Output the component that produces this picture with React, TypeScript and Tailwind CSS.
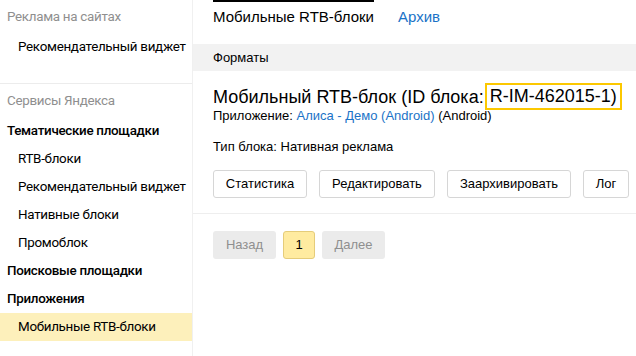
import React from "react";

const side = { fontFamily: 'Roboto, "Noto Sans", sans-serif' };
const main = { fontFamily: '"Liberation Sans", Arial, sans-serif' };

function SideItem({ children, kind }: { children: React.ReactNode; kind: "head" | "group" | "item" | "active" }) {
  const base = "h-[28px] flex items-center whitespace-nowrap text-[13.4px] tracking-[-0.3px] ";
  if (kind === "head") return <div className={base + "pl-[7px] text-[#8f8f8f]"}>{children}</div>;
  if (kind === "group") return <div className={base + "pl-[7px] font-medium text-black"}>{children}</div>;
  if (kind === "active") return <div className={base + "pl-[18px] text-black bg-[#fdf0bb]"}>{children}</div>;
  return <div className={base + "pl-[18px] text-black"}>{children}</div>;
}

export default function App() {
  return (
    <div className="w-[636px] h-[356px] overflow-hidden bg-white flex">
      <aside className="w-[193px] shrink-0 border-r border-[#f0f0f0] pt-[3px]" style={side}>
        <SideItem kind="head">Реклама на сайтах</SideItem>
        <div className="mt-[2px]">
          <SideItem kind="item">Рекомендательный виджет</SideItem>
        </div>
        <div className="mt-[22px] border-t border-[#ececec]" />
        <div className="mt-[3px]">
          <SideItem kind="head">Сервисы Яндекса</SideItem>
        </div>
        <div className="mt-[2px]">
          <SideItem kind="group">Тематические площадки</SideItem>
          <SideItem kind="item">RTB-блоки</SideItem>
          <SideItem kind="item">Рекомендательный виджет</SideItem>
          <SideItem kind="item">Нативные блоки</SideItem>
          <SideItem kind="item">Промоблок</SideItem>
          <SideItem kind="group">Поисковые площадки</SideItem>
          <SideItem kind="group">Приложения</SideItem>
          <SideItem kind="active">Мобильные RTB-блоки</SideItem>
        </div>
      </aside>
      <main className="flex-1 min-w-0 text-black whitespace-nowrap" style={main}>
        <div className="h-[44px] flex items-start pl-[20px]">
          <div className="border-t-2 border-black pt-[5px] text-[15px] leading-[20px]">Мобильные RTB-блоки</div>
          <div className="ml-[24px] pt-[7px] text-[15px] leading-[20px] text-[#1a73c7]">Архив</div>
        </div>
        <div className="h-[27px] bg-[#f2f2f2] flex items-center pl-[20px] text-[13px]">Форматы</div>
        <div className="pl-[20px] pt-[12px]">
          <div className="text-[18px] leading-[26px] flex items-center">
            <span>Мобильный RTB-блок (ID блока:&nbsp;</span>
            <span className="border-[2.5px] border-[#fcc800] px-[3px] leading-[23px] -ml-[4px]">R-IM-462015-1)</span>
          </div>
          <div className="text-[13px] leading-[16px] -mt-[2px]">
            Приложение: <span className="text-[#1a73c7]">Алиса - Демо (Android)</span> (Android)
          </div>
          <div className="text-[13px] leading-[16px] mt-[15px]">Тип блока: Нативная реклама</div>
          <div className="flex gap-[12px] mt-[15px] text-[13px]">
            <button className="h-[28px] w-[94px] border border-[#d6d6d6] rounded-[3px] bg-white">Статистика</button>
            <button className="h-[28px] w-[116px] border border-[#d6d6d6] rounded-[3px] bg-white">Редактировать</button>
            <button className="h-[28px] w-[124px] border border-[#d6d6d6] rounded-[3px] bg-white">Заархивировать</button>
            <button className="h-[28px] w-[46px] border border-[#d6d6d6] rounded-[3px] bg-white">Лог</button>
          </div>
        </div>
        <div className="mt-[15px] border-t border-[#eeeeee]" />
        <div className="pl-[20px] pt-[17px] flex gap-[7px] text-[13px]">
          <div className="h-[28px] w-[63px] rounded-[3px] bg-[#ebebeb] text-[#8f8f8f] flex items-center justify-center">Назад</div>
          <div className="h-[28px] w-[32px] rounded-[3px] bg-[#ffeba0] border border-[#e5cc7a] flex items-center justify-center">1</div>
          <div className="h-[28px] w-[63px] rounded-[3px] bg-[#ebebeb] text-[#8f8f8f] flex items-center justify-center">Далее</div>
        </div>
      </main>
    </div>
  );
}
